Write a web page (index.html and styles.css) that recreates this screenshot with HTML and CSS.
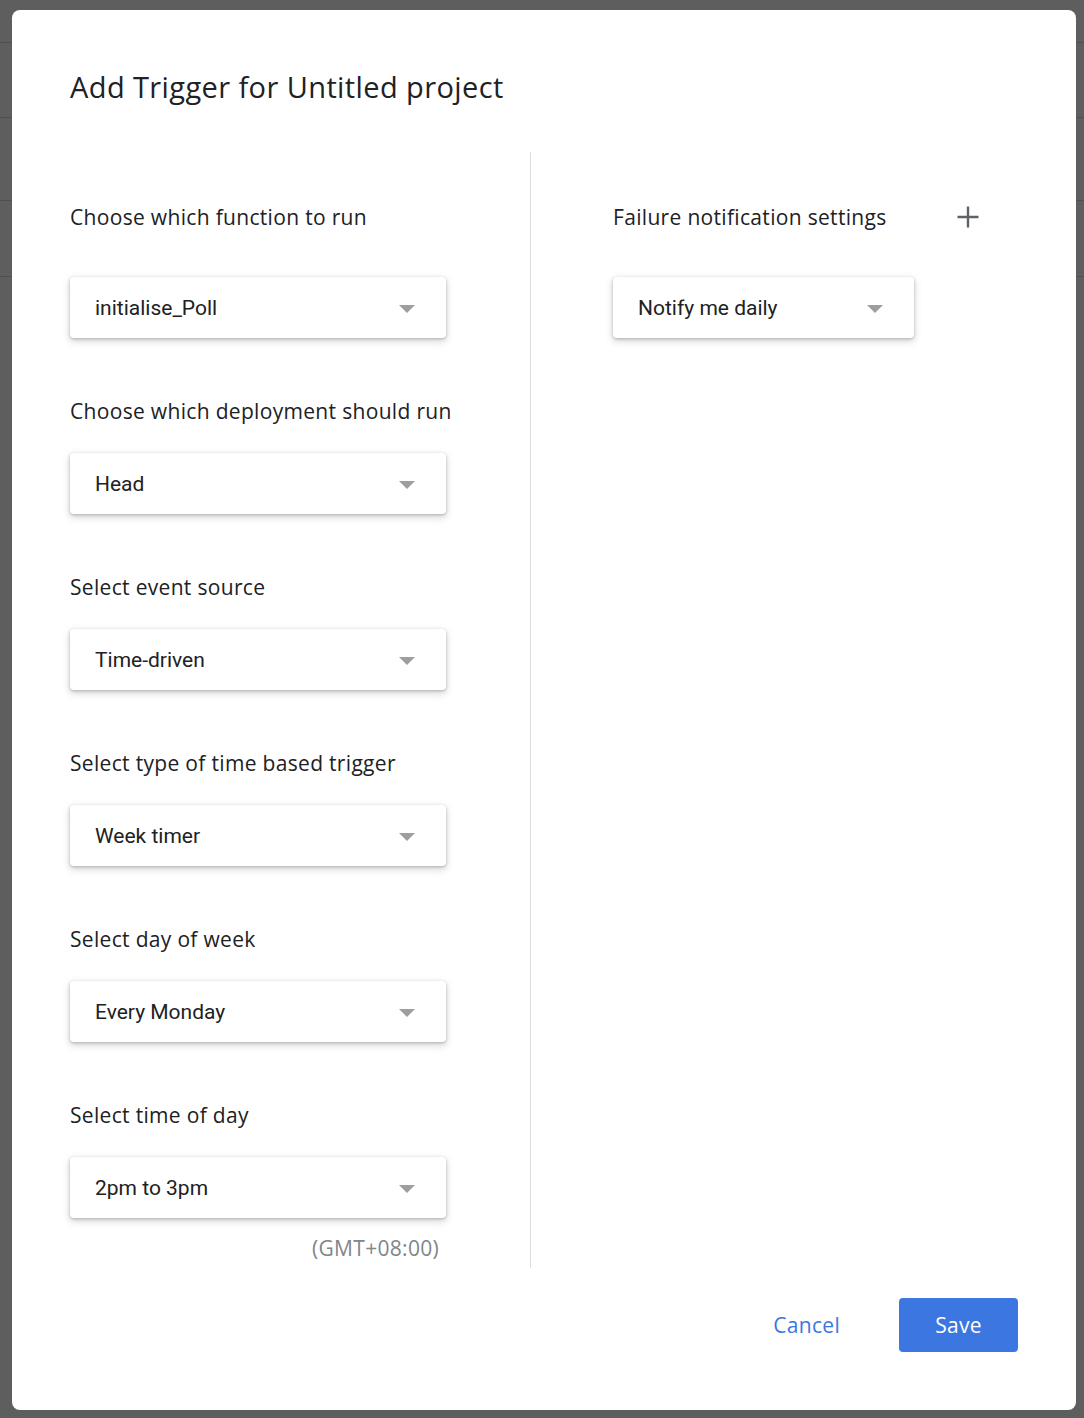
FILE: index.html
```html
<!DOCTYPE html>
<html>
<head>
<meta charset="utf-8">
<link rel="stylesheet" href="styles.css">
</head>
<body>
<div class="backdrop"></div>
<div class="dialog">
  <h1 class="title">Add Trigger for Untitled project</h1>
  <div class="columns">
    <div class="col-left">
      <div class="group first">
        <div class="label">Choose which function to run</div>
        <div class="select"><span>initialise_Poll</span><i class="arrow"></i></div>
      </div>
      <div class="group">
        <div class="label">Choose which deployment should run</div>
        <div class="select"><span>Head</span><i class="arrow"></i></div>
      </div>
      <div class="group">
        <div class="label">Select event source</div>
        <div class="select"><span>Time-driven</span><i class="arrow"></i></div>
      </div>
      <div class="group">
        <div class="label">Select type of time based trigger</div>
        <div class="select"><span>Week timer</span><i class="arrow"></i></div>
      </div>
      <div class="group">
        <div class="label">Select day of week</div>
        <div class="select"><span>Every Monday</span><i class="arrow"></i></div>
      </div>
      <div class="group">
        <div class="label">Select time of day</div>
        <div class="select"><span>2pm to 3pm</span><i class="arrow"></i></div>
        <div class="tz">(GMT+08:00)</div>
      </div>
    </div>
    <div class="col-right">
      <div class="group first">
        <div class="label-row">
          <div class="label">Failure notification settings</div>
          <svg class="plus" width="24" height="24" viewBox="0 0 24 24"><path d="M12 1.5v21M1.5 12h21" stroke="#5f6368" stroke-width="2.4" fill="none"/></svg>
        </div>
        <div class="select narrow"><span>Notify me daily</span><i class="arrow"></i></div>
      </div>
    </div>
  </div>
  <div class="footer">
    <button class="btn-text">Cancel</button>
    <button class="btn-primary">Save</button>
  </div>
</div>
</body>
</html>
```

FILE: styles.css
```css
html, body {
  margin: 0;
  padding: 0;
}
body {
  width: 1084px;
  height: 1418px;
  overflow: hidden;
  background: #5e5e5e;
  position: relative;
  font-family: "Open Sans", "Liberation Sans", sans-serif;
}
.backdrop {
  position: absolute;
  left: 0;
  top: 0;
  width: 1084px;
  height: 1418px;
  background:
    linear-gradient(#4f4f4f, #4f4f4f) 0 42px / 100% 1px no-repeat,
    linear-gradient(#4f4f4f, #4f4f4f) 0 117px / 100% 1px no-repeat,
    linear-gradient(#4f4f4f, #4f4f4f) 0 200px / 100% 1px no-repeat,
    linear-gradient(#4f4f4f, #4f4f4f) 0 276px / 100% 1px no-repeat;
}
.dialog {
  position: absolute;
  left: 12px;
  top: 10px;
  width: 1064px;
  height: 1400px;
  background: #fff;
  border-radius: 8px;
  box-sizing: border-box;
  padding: 59px 58px 0 58px;
  display: flex;
  flex-direction: column;
}
.title {
  margin: 0;
  font-size: 29px;
  line-height: 36px;
  font-weight: 400;
  color: #202124;
  letter-spacing: 0.4px;
}
.columns {
  display: flex;
  margin-top: 47px;
  height: 1116px;
}
.col-left {
  width: 461px;
  border-right: 1px solid #dadce0;
  padding-top: 53px;
  box-sizing: border-box;
}
.col-right {
  flex: 1;
  padding-left: 82px;
  padding-top: 53px;
}
.group {
  margin-bottom: 61px;
  position: relative;
}
.label {
  font-size: 21px;
  line-height: 24px;
  color: #202124;
  margin-bottom: 30px;
  letter-spacing: 0.32px;
  white-space: nowrap;
}
.group.first .label {
  margin-bottom: 48px;
}
.col-right .group.first .label {
  margin-bottom: 0;
}
.label-row {
  display: flex;
  align-items: center;
  justify-content: space-between;
  width: 367px;
  margin-bottom: 48px;
}
.plus {
  width: 24px;
  height: 24px;
}
.select {
  width: 376px;
  height: 61px;
  box-sizing: border-box;
  border-radius: 4px;
  background: #fff;
  box-shadow: 0 1px 3px rgba(60,64,67,0.3), 0 3px 7px 1px rgba(60,64,67,0.18);
  display: flex;
  align-items: center;
  justify-content: space-between;
  padding: 0 31px 0 25px;
  font-family: Roboto, "Liberation Sans", sans-serif;
  font-size: 21px;
  color: #202124;
}
.select.narrow {
  width: 301px;
}
.arrow {
  width: 0;
  height: 0;
  border-left: 8px solid transparent;
  border-right: 8px solid transparent;
  border-top: 8px solid #9e9e9e;
  margin-top: 2px;
}
.tz {
  text-align: right;
  width: 369px;
  margin-top: 18px;
  line-height: 24px;
  font-size: 21px;
  letter-spacing: 0.3px;
  color: #80868b;
}
.footer {
  display: flex;
  justify-content: flex-end;
  align-items: center;
  margin-top: 30px;
  gap: 35px;
}
button {
  font-family: "Open Sans", "Liberation Sans", sans-serif;
  font-size: 21px;
  border: none;
  cursor: pointer;
  letter-spacing: 0.3px;
  line-height: 24px;
  padding-bottom: 2px;
}
.btn-text {
  background: none;
  color: #3a76e0;
  padding-left: 24px;
  padding-right: 24px;
  height: 54px;
  font-weight: 500;
}
.btn-primary {
  background: #3c76e1;
  color: #fff;
  width: 119px;
  height: 54px;
  border-radius: 4px;
  font-weight: 500;
}
```
